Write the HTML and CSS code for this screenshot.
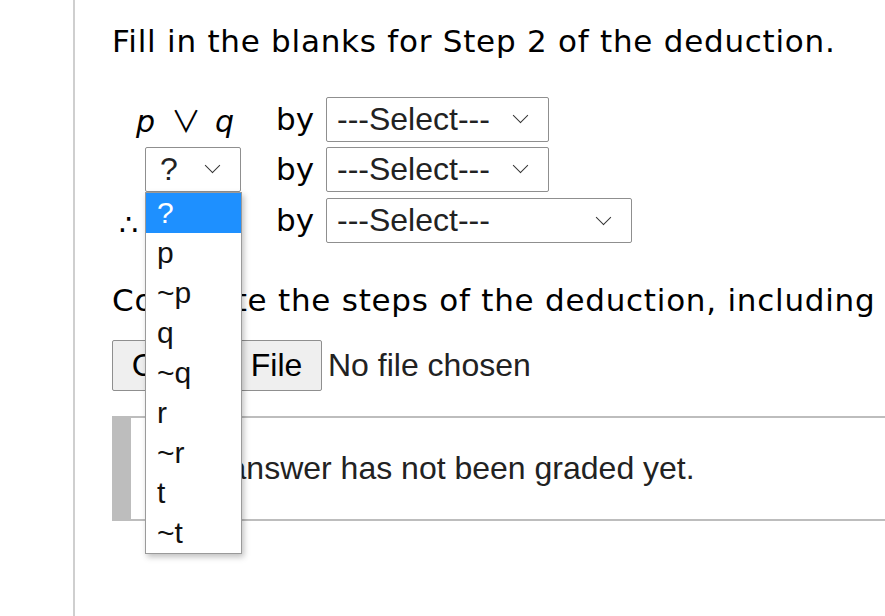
FILE: index.html
```html
<!DOCTYPE html>
<html>
<head>
<meta charset="utf-8">
<link rel="stylesheet" href="styles.css">
</head>
<body>
<div class="page">
  <div class="content">
    <p class="prompt">Fill in the blanks for Step 2 of the deduction.</p>
    <div class="proof">
      <div class="row">
        <div class="lhs"><span class="formula"><i>p</i><span class="or">∨</span><i>q</i></span></div>
        <span class="by">by</span>
        <div class="sel"><span>---Select---</span><span class="chev"></span></div>
      </div>
      <div class="row">
        <div class="lhs"><div class="sel small"><span>?</span><span class="chev"></span></div></div>
        <span class="by">by</span>
        <div class="sel"><span>---Select---</span><span class="chev"></span></div>
      </div>
      <div class="row">
        <div class="lhs"><span class="therefore">∴</span></div>
        <span class="by">by</span>
        <div class="sel wide"><span>---Select---</span><span class="chev"></span></div>
      </div>
      <ul class="menu">
        <li class="hl">?</li>
        <li>p</li>
        <li>~p</li>
        <li>q</li>
        <li>~q</li>
        <li>r</li>
        <li>~r</li>
        <li>t</li>
        <li>~t</li>
      </ul>
    </div>
    <p class="prompt second">Complete the steps of the deduction, including reasons.</p>
    <div class="file">
      <span class="filebtn">Choose File</span>
      <span class="filetxt">No file chosen</span>
    </div>
    <div class="graded">
      <span>Your answer has not been graded yet.</span>
    </div>
  </div>
</div>
</body>
</html>
```
FILE: styles.css
```css
html, body {
  margin: 0;
  padding: 0;
  background: #fff;
  overflow: hidden;
}
.page {
  height: 616px;
  width: 885px;
  overflow: hidden;
}
.content {
  margin-left: 73px;
  border-left: 2px solid #cfcfcf;
  height: 616px;
  padding-left: 37px;
  padding-top: 21px;
  box-sizing: border-box;
  width: 1100px;
}
.prompt {
  margin: 0;
  font-family: "DejaVu Sans", Verdana, sans-serif;
  font-size: 31px;
  letter-spacing: 0.75px;
  line-height: 40px;
  color: #000;
  white-space: nowrap;
}
.proof {
  position: relative;
  margin-top: 33px;
  font-family: "Liberation Sans", Arial, sans-serif;
}
.row {
  display: flex;
  align-items: center;
  height: 50px;
}
.row + .row + .row { height: 51px; }
.lhs {
  width: 164px;
  display: flex;
  justify-content: flex-end;
  box-sizing: border-box;
}
.formula {
  display: flex;
  align-items: baseline;
  margin-right: 42px;
  font-family: "DejaVu Sans", sans-serif;
  font-size: 30px;
  color: #000;
}
.formula i {
  font-style: oblique;
}
.or {
  font-family: "Noto Sans CJK SC", "DejaVu Sans", sans-serif;
  font-size: 30px;
  margin: 0 14px 0 16px;
}
.therefore {
  font-family: "DejaVu Sans", sans-serif;
  font-size: 30px;
  margin-right: 138px;
  margin-top: 10px;
}
.by {
  font-family: "DejaVu Sans", Verdana, sans-serif;
  font-size: 31px;
  width: 50px;
}
.sel {
  display: flex;
  align-items: center;
  justify-content: space-between;
  width: 223px;
  height: 45px;
  box-sizing: border-box;
  border: 1px solid #8f8f8f;
  border-radius: 2px;
  padding: 0 22px 0 10px;
  font-size: 32px;
  color: #222;
  background: #fff;
}
.sel.small {
  width: 96px;
  height: 45px;
  margin-right: 35px;
  padding-left: 14px;
}
.sel.wide { width: 306px; margin-top: 2px; }
.chev {
  width: 10px;
  height: 10px;
  border-right: 1.6px solid #333;
  border-bottom: 1.6px solid #333;
  transform: rotate(45deg);
  margin-top: -7px;
}
.menu {
  position: absolute;
  left: 33px;
  top: 98px;
  width: 97px;
  margin: 0;
  padding: 0;
  list-style: none;
  background: #fff;
  border: 1px solid #9a9a9a;
  box-sizing: border-box;
  box-shadow: 2px 3px 6px rgba(0,0,0,0.25);
  font-size: 30px;
  color: #111;
  z-index: 5;
}
.menu li {
  height: 40px;
  line-height: 40px;
  padding-left: 11px;
}
.menu li.hl {
  background: #1e90ff;
  color: #fff;
}
.second {
  margin-top: 35px;
}
.file {
  display: flex;
  align-items: center;
  margin-top: 20px;
  font-family: "Liberation Sans", Arial, sans-serif;
  font-size: 32px;
}
.filebtn {
  display: inline-block;
  width: 210px;
  height: 51px;
  line-height: 49px;
  box-sizing: border-box;
  border: 1px solid #8f8f8f;
  border-radius: 2px;
  background: #efefef;
  color: #000;
  text-align: center;
}
.filetxt {
  margin-left: 6px;
  color: #222;
}
.graded {
  margin-top: 25px;
  height: 105px;
  box-sizing: border-box;
  border-top: 2px solid #bdbdbd;
  border-bottom: 2px solid #bdbdbd;
  border-left: 19px solid #bdbdbd;
  display: flex;
  align-items: center;
  padding-left: 24px;
  font-family: "Liberation Sans", Arial, sans-serif;
  font-size: 32px;
  color: #222;
}
```
